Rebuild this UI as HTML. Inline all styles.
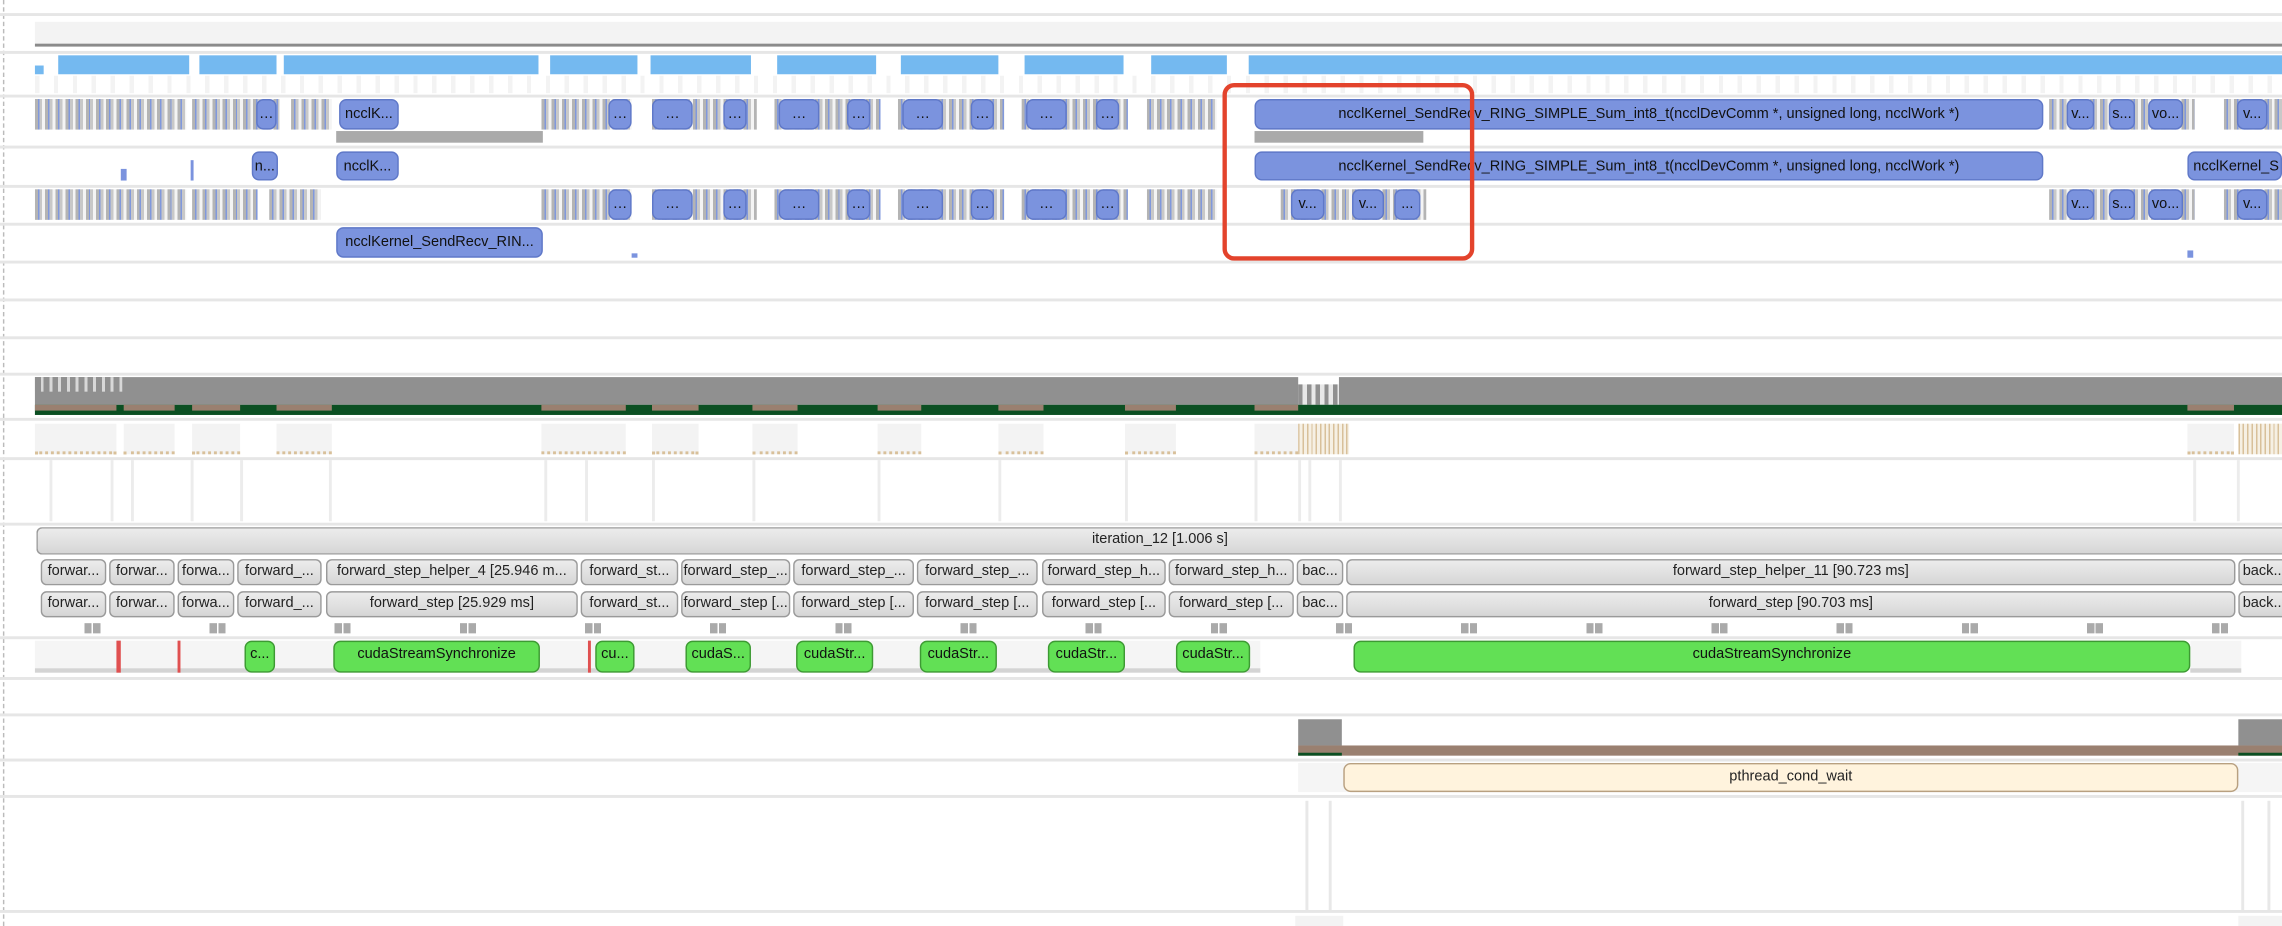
<!DOCTYPE html>
<html><head><meta charset="utf-8"><style>
html,body{margin:0;padding:0;background:#fff;overflow:hidden;width:2282px;height:926px}
#w{position:absolute;left:0;top:0;width:1568px;height:636px;transform:scale(1.45536,1.456);transform-origin:0 0;font-family:"Liberation Sans",sans-serif}
#w div{position:absolute;box-sizing:border-box}
.ln{left:0;width:1568px;height:1.5px;background:#e6e6e6}
.b{background:#7b93de;border:1px solid #5f78c8;border-radius:5px;font-size:10px;color:#111;text-align:center;white-space:nowrap;overflow:hidden;line-height:19px}
.g{background:linear-gradient(#ececec,#d6d6d6);border:1.5px solid #9a9a9a;border-radius:4px;font-size:10px;color:#222;text-align:center;white-space:nowrap;overflow:hidden;line-height:15px}
.gr{background:#62e055;border:1.5px solid #3d9a33;border-radius:5px;font-size:10px;color:#111;text-align:center;white-space:nowrap;overflow:hidden;line-height:18px}
.st{background:repeating-linear-gradient(90deg,#b4b4b4 0 2px,#8098dc 2px 3px,#c8c8c8 3px 5px,#f4f4f4 5px 7px)}
.bl{background:#74b9f0}
.bk{background:#f3f3f3}
.tk{width:1.5px;height:42px;top:316px;background:#ececec}
</style></head><body><div id="w">
<div style="left:2px;top:0;width:0;height:636px;border-left:1px dashed #bbb"></div>
<div class="ln" style="top:9px"></div>
<div style="left:24px;top:15px;width:1544px;height:17px;background:#f3f3f3;border-bottom:2px solid #8a8a8a"></div>
<div class="ln" style="top:35px"></div>
<div class="bl" style="left:24px;top:45px;width:6px;height:6px"></div>
<div class="bl" style="left:40px;top:38px;width:90px;height:13px"></div>
<div class="bl" style="left:137px;top:38px;width:53px;height:13px"></div>
<div class="bl" style="left:195px;top:38px;width:175px;height:13px"></div>
<div class="bl" style="left:378px;top:38px;width:60px;height:13px"></div>
<div class="bl" style="left:447px;top:38px;width:69px;height:13px"></div>
<div class="bl" style="left:534px;top:38px;width:68px;height:13px"></div>
<div class="bl" style="left:619px;top:38px;width:67px;height:13px"></div>
<div class="bl" style="left:704px;top:38px;width:68px;height:13px"></div>
<div class="bl" style="left:791px;top:38px;width:52px;height:13px"></div>
<div class="bl" style="left:858px;top:38px;width:710px;height:13px"></div>
<div style="left:24px;top:52px;width:1544px;height:12px;background:repeating-linear-gradient(90deg,#f3f3f3 0 3px,#fff 3px 13px)"></div>
<div class="ln" style="top:65px"></div>
<div class="st" style="left:24px;top:68px;width:104px;height:21px"></div>
<div class="st" style="left:132px;top:68px;width:60px;height:21px"></div>
<div class="st" style="left:200px;top:68px;width:28px;height:21px"></div>
<div class="st" style="left:372px;top:68px;width:62px;height:21px"></div>
<div class="st" style="left:448px;top:68px;width:72px;height:21px"></div>
<div class="st" style="left:532px;top:68px;width:73px;height:21px"></div>
<div class="st" style="left:617px;top:68px;width:73px;height:21px"></div>
<div class="st" style="left:702px;top:68px;width:73px;height:21px"></div>
<div class="st" style="left:788px;top:68px;width:48px;height:21px"></div>
<div class="st" style="left:1408px;top:68px;width:100px;height:21px"></div>
<div class="st" style="left:1528px;top:68px;width:40px;height:21px"></div>
<div class="b" style="left:176px;top:68px;width:14px;height:21px">…</div>
<div class="b" style="left:233px;top:68px;width:41px;height:21px">ncclK...</div>
<div class="b" style="left:418px;top:68px;width:16px;height:21px">…</div>
<div class="b" style="left:448px;top:68px;width:28px;height:21px">…</div>
<div class="b" style="left:497px;top:68px;width:16px;height:21px">…</div>
<div class="b" style="left:535px;top:68px;width:28px;height:21px">…</div>
<div class="b" style="left:582px;top:68px;width:16px;height:21px">…</div>
<div class="b" style="left:620px;top:68px;width:28px;height:21px">…</div>
<div class="b" style="left:667px;top:68px;width:16px;height:21px">…</div>
<div class="b" style="left:705px;top:68px;width:28px;height:21px">…</div>
<div class="b" style="left:753px;top:68px;width:16px;height:21px">…</div>
<div class="b" style="left:862px;top:68px;width:542px;height:21px">ncclKernel_SendRecv_RING_SIMPLE_Sum_int8_t(ncclDevComm *, unsigned long, ncclWork *)</div>
<div class="b" style="left:1420px;top:68px;width:19px;height:21px">v...</div>
<div class="b" style="left:1449px;top:68px;width:18px;height:21px">s...</div>
<div class="b" style="left:1476px;top:68px;width:24px;height:21px">vo...</div>
<div class="b" style="left:1537px;top:68px;width:21px;height:21px">v...</div>
<div style="left:231px;top:90px;width:142px;height:8px;background:#aaa"></div>
<div style="left:862px;top:90px;width:116px;height:8px;background:#aaa"></div>
<div class="ln" style="top:100px"></div>
<div style="left:83px;top:116px;width:4px;height:8px;background:#7b93de"></div>
<div style="left:131px;top:110px;width:2px;height:14px;background:#7b93de"></div>
<div class="b" style="left:173px;top:104px;width:18px;height:20px">n...</div>
<div class="b" style="left:231px;top:104px;width:43px;height:20px">ncclK...</div>
<div class="b" style="left:862px;top:104px;width:542px;height:20px">ncclKernel_SendRecv_RING_SIMPLE_Sum_int8_t(ncclDevComm *, unsigned long, ncclWork *)</div>
<div class="b" style="left:1503px;top:104px;width:65px;height:20px;text-align:left;padding-left:3px">ncclKernel_S</div>
<div class="ln" style="top:127px"></div>
<div class="st" style="left:24px;top:130px;width:104px;height:21px"></div>
<div class="st" style="left:132px;top:130px;width:45px;height:21px"></div>
<div class="st" style="left:185px;top:130px;width:35px;height:21px"></div>
<div class="st" style="left:372px;top:130px;width:62px;height:21px"></div>
<div class="st" style="left:448px;top:130px;width:72px;height:21px"></div>
<div class="st" style="left:532px;top:130px;width:73px;height:21px"></div>
<div class="st" style="left:617px;top:130px;width:73px;height:21px"></div>
<div class="st" style="left:702px;top:130px;width:73px;height:21px"></div>
<div class="st" style="left:788px;top:130px;width:48px;height:21px"></div>
<div class="st" style="left:880px;top:130px;width:100px;height:21px"></div>
<div class="st" style="left:1408px;top:130px;width:100px;height:21px"></div>
<div class="st" style="left:1528px;top:130px;width:40px;height:21px"></div>
<div class="b" style="left:418px;top:130px;width:16px;height:21px">…</div>
<div class="b" style="left:448px;top:130px;width:28px;height:21px">…</div>
<div class="b" style="left:497px;top:130px;width:16px;height:21px">…</div>
<div class="b" style="left:535px;top:130px;width:28px;height:21px">…</div>
<div class="b" style="left:582px;top:130px;width:16px;height:21px">…</div>
<div class="b" style="left:620px;top:130px;width:28px;height:21px">…</div>
<div class="b" style="left:667px;top:130px;width:16px;height:21px">…</div>
<div class="b" style="left:705px;top:130px;width:28px;height:21px">…</div>
<div class="b" style="left:753px;top:130px;width:16px;height:21px">…</div>
<div class="b" style="left:887px;top:130px;width:23px;height:21px">v...</div>
<div class="b" style="left:929px;top:130px;width:22px;height:21px">v...</div>
<div class="b" style="left:958px;top:130px;width:18px;height:21px">...</div>
<div class="b" style="left:1420px;top:130px;width:19px;height:21px">v...</div>
<div class="b" style="left:1449px;top:130px;width:18px;height:21px">s...</div>
<div class="b" style="left:1476px;top:130px;width:24px;height:21px">vo...</div>
<div class="b" style="left:1537px;top:130px;width:21px;height:21px">v...</div>
<div class="ln" style="top:153px"></div>
<div class="b" style="left:231px;top:156px;width:142px;height:21px">ncclKernel_SendRecv_RIN...</div>
<div style="left:434px;top:174px;width:4px;height:3px;background:#7b93de"></div>
<div style="left:1503px;top:172px;width:4px;height:5px;background:#7b93de"></div>
<div class="ln" style="top:179px"></div>
<div class="ln" style="top:205px"></div>
<div class="ln" style="top:231px"></div>
<div class="ln" style="top:256px"></div>
<div style="left:24px;top:259px;width:868px;height:19px;background:#909090"></div>
<div style="left:24px;top:259px;width:60px;height:10px;background:repeating-linear-gradient(90deg,#909090 0 4px,#d8d8d8 4px 6px)"></div>
<div style="left:920px;top:259px;width:648px;height:19px;background:#909090"></div>
<div style="left:892px;top:264px;width:28px;height:14px;background:repeating-linear-gradient(90deg,#909090 0 3px,#e8e8e8 3px 6px)"></div>
<div style="left:24px;top:278px;width:1544px;height:7px;background:#0b4f22"></div>
<div style="left:24px;top:278px;width:56px;height:4px;background:#9a8070"></div>
<div style="left:85px;top:278px;width:35px;height:4px;background:#9a8070"></div>
<div style="left:132px;top:278px;width:33px;height:4px;background:#9a8070"></div>
<div style="left:190px;top:278px;width:38px;height:4px;background:#9a8070"></div>
<div style="left:372px;top:278px;width:58px;height:4px;background:#9a8070"></div>
<div style="left:448px;top:278px;width:32px;height:4px;background:#9a8070"></div>
<div style="left:517px;top:278px;width:31px;height:4px;background:#9a8070"></div>
<div style="left:603px;top:278px;width:30px;height:4px;background:#9a8070"></div>
<div style="left:686px;top:278px;width:31px;height:4px;background:#9a8070"></div>
<div style="left:773px;top:278px;width:35px;height:4px;background:#9a8070"></div>
<div style="left:862px;top:278px;width:30px;height:4px;background:#9a8070"></div>
<div style="left:1503px;top:278px;width:32px;height:4px;background:#9a8070"></div>
<div class="ln" style="top:287px"></div>
<div class="bk" style="left:24px;top:291px;width:56px;height:21px;border-bottom:2px dotted #d8c09a"></div>
<div class="bk" style="left:85px;top:291px;width:35px;height:21px;border-bottom:2px dotted #d8c09a"></div>
<div class="bk" style="left:132px;top:291px;width:33px;height:21px;border-bottom:2px dotted #d8c09a"></div>
<div class="bk" style="left:190px;top:291px;width:38px;height:21px;border-bottom:2px dotted #d8c09a"></div>
<div class="bk" style="left:372px;top:291px;width:58px;height:21px;border-bottom:2px dotted #d8c09a"></div>
<div class="bk" style="left:448px;top:291px;width:32px;height:21px;border-bottom:2px dotted #d8c09a"></div>
<div class="bk" style="left:517px;top:291px;width:31px;height:21px;border-bottom:2px dotted #d8c09a"></div>
<div class="bk" style="left:603px;top:291px;width:30px;height:21px;border-bottom:2px dotted #d8c09a"></div>
<div class="bk" style="left:686px;top:291px;width:31px;height:21px;border-bottom:2px dotted #d8c09a"></div>
<div class="bk" style="left:773px;top:291px;width:35px;height:21px;border-bottom:2px dotted #d8c09a"></div>
<div class="bk" style="left:862px;top:291px;width:30px;height:21px;border-bottom:2px dotted #d8c09a"></div>
<div style="left:892px;top:291px;width:35px;height:21px;background:repeating-linear-gradient(90deg,#d8c09a 0 1px,#f6f0e4 1px 3px)"></div>
<div style="left:1538px;top:291px;width:30px;height:21px;background:repeating-linear-gradient(90deg,#d8c09a 0 1px,#f6f0e4 1px 3px)"></div>
<div class="bk" style="left:1503px;top:291px;width:32px;height:21px;border-bottom:2px dotted #d8c09a"></div>
<div class="ln" style="top:314px"></div>
<div class="tk" style="left:34px"></div><div class="tk" style="left:76px"></div><div class="tk" style="left:90px"></div><div class="tk" style="left:131px"></div><div class="tk" style="left:165px"></div><div class="tk" style="left:226px"></div><div class="tk" style="left:374px"></div><div class="tk" style="left:402px"></div><div class="tk" style="left:448px"></div><div class="tk" style="left:517px"></div><div class="tk" style="left:603px"></div><div class="tk" style="left:686px"></div><div class="tk" style="left:773px"></div><div class="tk" style="left:862px"></div><div class="tk" style="left:892px"></div><div class="tk" style="left:899px"></div><div class="tk" style="left:920px"></div><div class="tk" style="left:1507px"></div><div class="tk" style="left:1537px"></div>
<div class="ln" style="top:359px"></div>
<div class="g" style="left:25px;top:362px;width:1543px;height:19px;line-height:16px;border-right:none;border-radius:4px 0 0 4px">iteration_12 [1.006 s]</div>
<div class="g" style="left:28px;top:384px;width:45px;height:18px">forwar...</div>
<div class="g" style="left:75px;top:384px;width:45px;height:18px">forwar...</div>
<div class="g" style="left:122px;top:384px;width:39px;height:18px">forwa...</div>
<div class="g" style="left:163px;top:384px;width:58px;height:18px">forward_...</div>
<div class="g" style="left:224px;top:384px;width:173px;height:18px">forward_step_helper_4 [25.946 m...</div>
<div class="g" style="left:399px;top:384px;width:67px;height:18px">forward_st...</div>
<div class="g" style="left:468px;top:384px;width:75px;height:18px">forward_step_...</div>
<div class="g" style="left:545px;top:384px;width:83px;height:18px">forward_step_...</div>
<div class="g" style="left:630px;top:384px;width:83px;height:18px">forward_step_...</div>
<div class="g" style="left:716px;top:384px;width:85px;height:18px">forward_step_h...</div>
<div class="g" style="left:803px;top:384px;width:86px;height:18px">forward_step_h...</div>
<div class="g" style="left:891px;top:384px;width:32px;height:18px">bac...</div>
<div class="g" style="left:925px;top:384px;width:611px;height:18px">forward_step_helper_11 [90.723 ms]</div>
<div class="g" style="left:1538px;top:384px;width:34px;height:18px;text-align:left;padding-left:2px">back...</div>
<div class="g" style="left:28px;top:406px;width:45px;height:18px">forwar...</div>
<div class="g" style="left:75px;top:406px;width:45px;height:18px">forwar...</div>
<div class="g" style="left:122px;top:406px;width:39px;height:18px">forwa...</div>
<div class="g" style="left:163px;top:406px;width:58px;height:18px">forward_...</div>
<div class="g" style="left:224px;top:406px;width:173px;height:18px">forward_step [25.929 ms]</div>
<div class="g" style="left:399px;top:406px;width:67px;height:18px">forward_st...</div>
<div class="g" style="left:468px;top:406px;width:75px;height:18px">forward_step [...</div>
<div class="g" style="left:545px;top:406px;width:83px;height:18px">forward_step [...</div>
<div class="g" style="left:630px;top:406px;width:83px;height:18px">forward_step [...</div>
<div class="g" style="left:716px;top:406px;width:85px;height:18px">forward_step [...</div>
<div class="g" style="left:803px;top:406px;width:86px;height:18px">forward_step [...</div>
<div class="g" style="left:891px;top:406px;width:32px;height:18px">bac...</div>
<div class="g" style="left:925px;top:406px;width:611px;height:18px">forward_step [90.703 ms]</div>
<div class="g" style="left:1538px;top:406px;width:34px;height:18px;text-align:left;padding-left:2px">back...</div>
<div style="left:24px;top:428px;width:1544px;height:7px;background:repeating-linear-gradient(90deg,transparent 0 34px,#aaa 34px 39px,transparent 39px 40px,#aaa 40px 45px,transparent 45px 86px)"></div>
<div class="ln" style="top:437px"></div>
<div style="left:24px;top:440px;width:842px;height:22px;background:#f5f5f5;border-bottom:3px solid #d4d4d4"></div>
<div style="left:1505px;top:440px;width:35px;height:22px;background:#f5f5f5;border-bottom:3px solid #d4d4d4"></div>
<div style="left:80px;top:440px;width:3px;height:22px;background:#e05050"></div>
<div style="left:122px;top:440px;width:2px;height:22px;background:#e05050"></div>
<div style="left:404px;top:440px;width:2px;height:22px;background:#e05050"></div>
<div class="gr" style="left:168px;top:440px;width:21px;height:22px">c...</div>
<div class="gr" style="left:229px;top:440px;width:142px;height:22px">cudaStreamSynchronize</div>
<div class="gr" style="left:409px;top:440px;width:27px;height:22px">cu...</div>
<div class="gr" style="left:471px;top:440px;width:45px;height:22px">cudaS...</div>
<div class="gr" style="left:547px;top:440px;width:53px;height:22px">cudaStr...</div>
<div class="gr" style="left:632px;top:440px;width:53px;height:22px">cudaStr...</div>
<div class="gr" style="left:720px;top:440px;width:53px;height:22px">cudaStr...</div>
<div class="gr" style="left:808px;top:440px;width:51px;height:22px">cudaStr...</div>
<div class="gr" style="left:930px;top:440px;width:575px;height:22px">cudaStreamSynchronize</div>
<div class="ln" style="top:465px"></div>
<div class="ln" style="top:490px"></div>
<div style="left:892px;top:494px;width:30px;height:18px;background:#909090"></div>
<div style="left:1538px;top:494px;width:30px;height:18px;background:#909090"></div>
<div style="left:892px;top:512px;width:676px;height:7px;background:#9a8070"></div>
<div style="left:892px;top:517px;width:30px;height:2px;background:#0b4f22"></div>
<div style="left:1538px;top:517px;width:30px;height:2px;background:#0b4f22"></div>
<div class="ln" style="top:521px"></div>
<div style="left:892px;top:524px;width:676px;height:20px;background:#f5f5f5"></div>
<div style="left:923px;top:524px;width:615px;height:20px;background:#fff3dd;border:1.5px solid #b8a080;border-radius:5px;font-size:10px;text-align:center;line-height:17px;color:#222">pthread_cond_wait</div>
<div class="ln" style="top:546px"></div>
<div style="left:897px;top:550px;width:2px;height:75px;background:#e8e8e8"></div>
<div style="left:913px;top:550px;width:2px;height:75px;background:#e8e8e8"></div>
<div style="left:1540px;top:550px;width:2px;height:75px;background:#e8e8e8"></div>
<div style="left:1558px;top:550px;width:2px;height:75px;background:#e8e8e8"></div>
<div class="ln" style="top:625px"></div>
<div style="left:890px;top:629px;width:33px;height:7px;background:#f3f3f3"></div>
<div style="left:1538px;top:629px;width:30px;height:7px;background:#f3f3f3"></div>
<div style="left:840px;top:57px;width:173px;height:122px;border:3px solid #e3432c;border-radius:8px"></div>
</div></body></html>
